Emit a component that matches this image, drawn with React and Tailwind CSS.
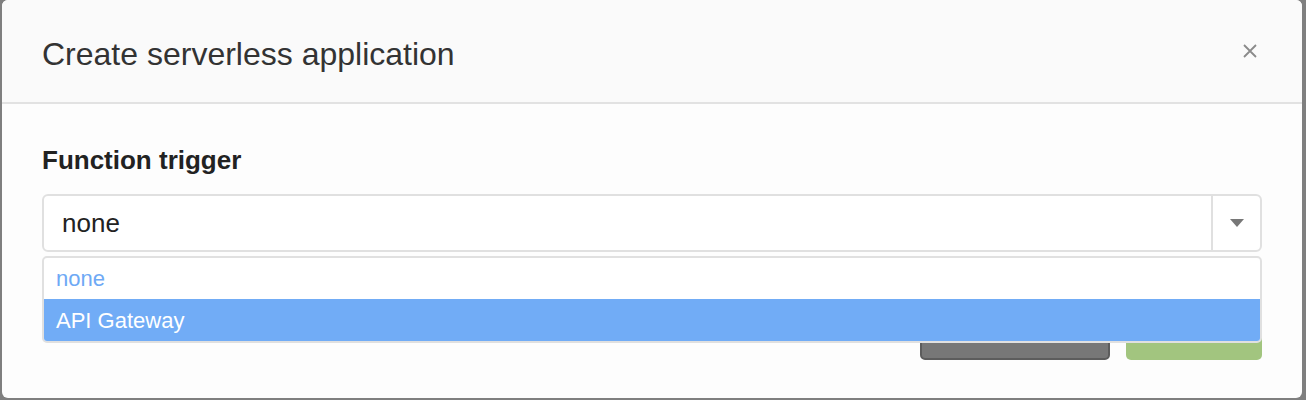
import React from "react";

const App = () => {
	return (
		<div className="h-[400px] w-[1306px] bg-[#7f7f7f] pl-[2px] pr-[4px] pb-[2px] overflow-hidden" style={{ fontFamily: "'Liberation Sans', Arial, sans-serif" }}>
			{/* modal */}
			<div className="h-full bg-[#fdfdfd] rounded-[6px] overflow-hidden flex flex-col">
				<div className="h-[104px] shrink-0 bg-[#fafafa] border-b-2 border-[#e2e2e2] pl-[40px] pr-[44px] flex items-center justify-between">
					<h1 className="text-[32px] text-[#333] leading-none mt-[6px]">Create serverless application</h1>
					<button className="text-[#888] w-[16px] h-[16px] flex items-center justify-center">
						<svg width="14" height="14" viewBox="0 0 14 14">
							<path d="M1 1L13 13M13 1L1 13" stroke="#8a8a8a" strokeWidth="1.8" />
						</svg>
					</button>
				</div>

				<div className="px-[40px] pt-[41px]">
					<label className="block text-[26px] font-bold text-[#222] leading-[30px]">Function trigger</label>

					<div className="relative mt-[19px]">
						<div className="h-[58px] border-2 border-[#e0e0e0] rounded-[6px] bg-white flex">
							<div className="flex-1 flex items-center pl-[18px] text-[26px] text-[#222]">none</div>
							<div className="w-[49px] border-l-2 border-[#e0e0e0] flex items-center justify-center">
								<svg width="14" height="9" viewBox="0 0 14 9">
									<path d="M0 0H14L7 8Z" fill="#777" />
								</svg>
							</div>
						</div>

						{/* options menu */}
						<div className="absolute left-0 right-0 top-[62px] z-10 border-2 border-[#e0e0e0] rounded-[5px] bg-white overflow-hidden">
							<div className="h-[41px] flex items-center pl-[12px] text-[22px] text-[#6ea9f5]">none</div>
							<div className="h-[42px] flex items-center pl-[12px] text-[22px] text-white bg-[#71acf6]">API Gateway</div>
						</div>
					</div>

					<div className="flex justify-end gap-[16px] mt-[64px]">
						<button className="w-[190px] h-[44px] bg-[#777] border-2 border-[#5c5c5c] rounded-[5px] text-white">Cancel</button>
						<button className="w-[136px] h-[44px] bg-[#a2c57f] rounded-[5px] text-white">Create</button>
					</div>
				</div>
			</div>
		</div>
	);
};

export default App;
